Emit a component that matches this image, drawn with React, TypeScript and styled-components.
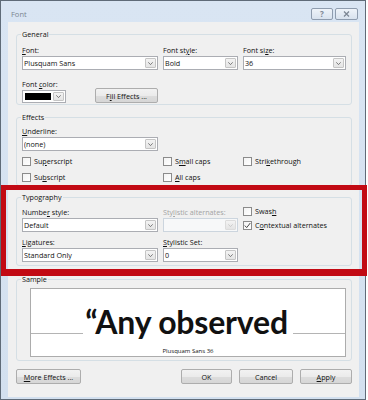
import React from 'react';
import styled, { createGlobalStyle } from 'styled-components';

const Global = createGlobalStyle`
  html, body { margin: 0; padding: 0; background: #ffffff; }
  body {
    font-family: "Open Sans", "Noto Sans", sans-serif;
    font-size: 7.2px;
    color: #111111;
  }
  * { box-sizing: border-box; }
`;

const Page = styled.div`
  position: relative;
  width: 368px;
  height: 400px;
  overflow: hidden;
`;

const Window = styled.div`
  width: 366px;
  height: 400px;
  border: 1px solid #5f6b78;
  background: linear-gradient(#d9e5f3, #d3e0ef);
  padding: 0 6px 2px 7px;
  display: flex;
  flex-direction: column;
`;

const TitleBar = styled.div`
  height: 21px;
  padding: 7px 1px 0 3px;
  display: flex;
  align-items: flex-start;
  gap: 2px;
`;

const Title = styled.div`
  flex: 1;
  line-height: 12px;
  font-size: 7.5px;
  color: #7b8591;
`;

const CaptionButton = styled.div<{ $w: number }>`
  width: ${(p) => p.$w}px;
  height: 12px;
  border: 1px solid #8e9cae;
  border-radius: 2px;
  background: linear-gradient(#eef3f9, #d8e2ee);
  display: flex;
  align-items: center;
  justify-content: center;
  color: #7d8794;
`;

const Client = styled.div`
  flex: 1;
  background: #f0f0f0;
  padding: 7px 7px 0 8px;
  display: flex;
  flex-direction: column;
`;

const Group = styled.fieldset<{ $mt: number; $pt: number; $pb: number; $pl?: number }>`
  margin: ${(p) => p.$mt}px 0 0 0;
  min-width: 0;
  width: 336px;
  padding: ${(p) => p.$pt}px 5px ${(p) => p.$pb}px ${(p) => p.$pl ?? 5}px;
  border: 1px solid #d5dfe5;
  border-radius: 3px;
`;

const Legend = styled.legend<{ $ml?: number }>`
  padding: 0 1px;
  margin-left: ${(p) => p.$ml ?? -1}px;
  line-height: 10px;
`;

const Cols = styled.div<{ $rowGap: number }>`
  display: grid;
  grid-template-columns: 136px 75px 103px;
  column-gap: 5px;
  row-gap: ${(p) => p.$rowGap}px;
`;

const Field = styled.div`
  display: flex;
  flex-direction: column;
  min-width: 0;
`;

const Label = styled.div<{ $disabled?: boolean }>`
  line-height: 10px;
  height: 10px;
  margin-bottom: 1px;
  white-space: nowrap;
  color: ${(p) => (p.$disabled ? '#a3a3a3' : '#111111')};
`;

const Mn = styled.span`
  text-decoration: underline;
  text-underline-offset: 1px;
  text-decoration-thickness: 0.6px;
`;

const ComboBox = styled.div<{ $disabled?: boolean; $h?: number; $w?: number }>`
  height: ${(p) => p.$h ?? 14}px;
  ${(p) => (p.$w ? `width: ${p.$w}px;` : '')}
  border: 1px solid ${(p) => (p.$disabled ? '#ccd5de' : '#abadb3')};
  background: ${(p) => (p.$disabled ? '#f7f8f9' : '#ffffff')};
  padding: 1px;
  display: flex;
  align-items: stretch;
  gap: 1px;
`;

const ComboText = styled.div`
  flex: 1;
  line-height: 10px;
  white-space: nowrap;
  overflow: hidden;
`;

const DropButton = styled.div<{ $disabled?: boolean }>`
  width: 11px;
  border: 1px solid ${(p) => (p.$disabled ? '#dcdcdc' : '#c5c5c5')};
  border-radius: 1px;
  background: linear-gradient(#f3f3f3, #e4e4e4);
  display: flex;
  align-items: center;
  justify-content: center;
  color: ${(p) => (p.$disabled ? '#c4c4c4' : '#606060')};
`;

const Chevron = () => (
  <svg width="5" height="3" viewBox="0 0 5 3">
    <polyline points="0.3,0.3 2.5,2.6 4.7,0.3" fill="none" stroke="currentColor" strokeWidth="0.8" />
  </svg>
);

const Combo: React.FC<{ value?: string; disabled?: boolean }> = ({ value, disabled }) => (
  <ComboBox $disabled={disabled}>
    <ComboText>{value}</ComboText>
    <DropButton $disabled={disabled}>
      <Chevron />
    </DropButton>
  </ComboBox>
);

const ColorRow = styled.div`
  display: flex;
  align-items: flex-end;
  justify-content: space-between;
`;

const Swatch = styled.div`
  flex: 1;
  margin: 1px;
  background: #000000;
`;

const Button = styled.div<{ $w: number }>`
  width: ${(p) => p.$w}px;
  height: 15px;
  border: 1px solid #adadad;
  border-radius: 2px;
  background: linear-gradient(#f2f2f2 0%, #ebebeb 50%, #dddddd 51%, #d6d6d6 100%);
  display: flex;
  align-items: center;
  justify-content: center;
  white-space: nowrap;
  line-height: 10px;
`;

const CheckRow = styled.div`
  display: flex;
  align-items: center;
  gap: 3px;
  height: 9px;
  white-space: nowrap;
  line-height: 9px;
`;

const Box = styled.div`
  width: 9px;
  height: 9px;
  border: 1px solid #8b8b8b;
  background: linear-gradient(135deg, #f3f3f3, #ffffff);
  display: flex;
  align-items: center;
  justify-content: center;
  flex: none;
`;

const Check: React.FC<{ checked?: boolean; children: React.ReactNode }> = ({ checked, children }) => (
  <CheckRow>
    <Box>
      {checked && (
        <svg width="7" height="7" viewBox="0 0 7 7">
          <polyline points="0.8,3.6 2.7,5.6 6.3,1" fill="none" stroke="#333" strokeWidth="0.9" />
        </svg>
      )}
    </Box>
    <span>{children}</span>
  </CheckRow>
);

const CheckStack = styled.div<{ $gap: number }>`
  display: flex;
  flex-direction: column;
  gap: ${(p) => p.$gap}px;
`;

const Preview = styled.div`
  height: 69px;
  border: 1px solid #acacac;
  background: #ffffff;
  display: flex;
  flex-direction: column;
  padding-top: 17px;
`;

const SampleRow = styled.div`
  display: flex;
  align-items: baseline;
`;

const Rule = styled.div`
  flex: 1;
  height: 0;
  border-bottom: 1px solid #b4b4b4;
`;

const SampleText = styled.div`
  font-family: "Lato", "Open Sans", sans-serif;
  font-weight: 700;
  font-size: 32px;
  line-height: 32px;
  letter-spacing: -0.2px;
  color: #111111;
  padding: 0 5px 0 2px;
  white-space: nowrap;
`;

const SampleCaption = styled.div`
  margin-top: 9px;
  text-align: center;
  font-size: 6px;
  line-height: 8px;
`;

const ButtonBar = styled.div`
  margin-top: 8px;
  width: 336px;
  display: flex;
  gap: 7px;
`;

const Spacer = styled.div`
  flex: 1;
`;

const HelpGlyph = styled.span`
  font-size: 8px;
  font-weight: 700;
  line-height: 10px;
`;

const Highlight = styled.div`
  position: absolute;
  left: 1px;
  top: 185px;
  width: 366px;
  height: 91px;
  border: 5px solid #c20a14;
  border-bottom-width: 7px;
  pointer-events: none;
`;

export default function App() {
  return (
    <Page>
      <Global />
      <Window>
        <TitleBar>
          <Title>Font</Title>
          <CaptionButton $w={22}>
            <HelpGlyph>?</HelpGlyph>
          </CaptionButton>
          <CaptionButton $w={23}>
            <svg width="7" height="6" viewBox="0 0 7 6">
              <path d="M1 0.5 L6 5.5 M6 0.5 L1 5.5" stroke="#7d8794" strokeWidth="1.3" fill="none" />
            </svg>
          </CaptionButton>
        </TitleBar>
        <Client>
          <Group $mt={0} $pt={6} $pb={1}>
            <Legend>General</Legend>
            <Cols $rowGap={9}>
              <Field>
                <Label>
                  <Mn>F</Mn>ont:
                </Label>
                <Combo value="Plusquam Sans" />
              </Field>
              <Field>
                <Label>
                  Font st<Mn>y</Mn>le:
                </Label>
                <Combo value="Bold" />
              </Field>
              <Field>
                <Label>
                  Font si<Mn>z</Mn>e:
                </Label>
                <Combo value="36" />
              </Field>
              <ColorRow>
                <Field>
                  <Label>
                    Font <Mn>c</Mn>olor:
                  </Label>
                  <ComboBox $h={13} $w={44}>
                    <Swatch />
                    <DropButton>
                      <Chevron />
                    </DropButton>
                  </ComboBox>
                </Field>
                <Button $w={63}>
                  F<Mn>i</Mn>ll Effects ...
                </Button>
              </ColorRow>
            </Cols>
          </Group>

          <Group $mt={7} $pt={4} $pb={3}>
            <Legend>Effects</Legend>
            <Cols $rowGap={6}>
              <Field>
                <Label>
                  <Mn>U</Mn>nderline:
                </Label>
                <Combo value="(none)" />
              </Field>
              <div />
              <div />
              <CheckStack $gap={7}>
                <Check>
                  Su<Mn>p</Mn>erscript
                </Check>
                <Check>
                  Su<Mn>b</Mn>script
                </Check>
              </CheckStack>
              <CheckStack $gap={7}>
                <Check>
                  S<Mn>m</Mn>all caps
                </Check>
                <Check>
                  <Mn>A</Mn>ll caps
                </Check>
              </CheckStack>
              <CheckStack $gap={7}>
                <Check>
                  Stri<Mn>k</Mn>ethrough
                </Check>
              </CheckStack>
            </Cols>
          </Group>

          <Group $mt={6} $pt={5} $pb={3}>
            <Legend>Typography</Legend>
            <Cols $rowGap={5}>
              <Field>
                <Label>
                  Numbe<Mn>r</Mn> style:
                </Label>
                <Combo value="Default" />
              </Field>
              <Field>
                <Label $disabled>
                  Sty<Mn>l</Mn>istic alternates:
                </Label>
                <Combo disabled />
              </Field>
              <CheckStack $gap={5}>
                <Check>
                  Swas<Mn>h</Mn>
                </Check>
                <Check checked>
                  C<Mn>o</Mn>ntextual alternates
                </Check>
              </CheckStack>
              <Field>
                <Label>
                  <Mn>L</Mn>igatures:
                </Label>
                <Combo value="Standard Only" />
              </Field>
              <Field>
                <Label>
                  <Mn>S</Mn>tylistic Set:
                </Label>
                <Combo value="0" />
              </Field>
            </Cols>
          </Group>

          <Group $mt={8} $pt={4} $pb={3} $pl={13}>
            <Legend $ml={-9}>Sample</Legend>
            <Preview>
              <SampleRow>
                <Rule />
                <SampleText>“Any observed</SampleText>
                <Rule />
              </SampleRow>
              <SampleCaption>Plusquam Sans 36</SampleCaption>
            </Preview>
          </Group>

          <ButtonBar>
            <Button $w={65}>
              <Mn>M</Mn>ore Effects ...
            </Button>
            <Spacer />
            <Button $w={51}>OK</Button>
            <Button $w={54}>Cancel</Button>
            <Button $w={52}>
              <Mn>A</Mn>pply
            </Button>
          </ButtonBar>
        </Client>
      </Window>
      <Highlight />
    </Page>
  );
}
